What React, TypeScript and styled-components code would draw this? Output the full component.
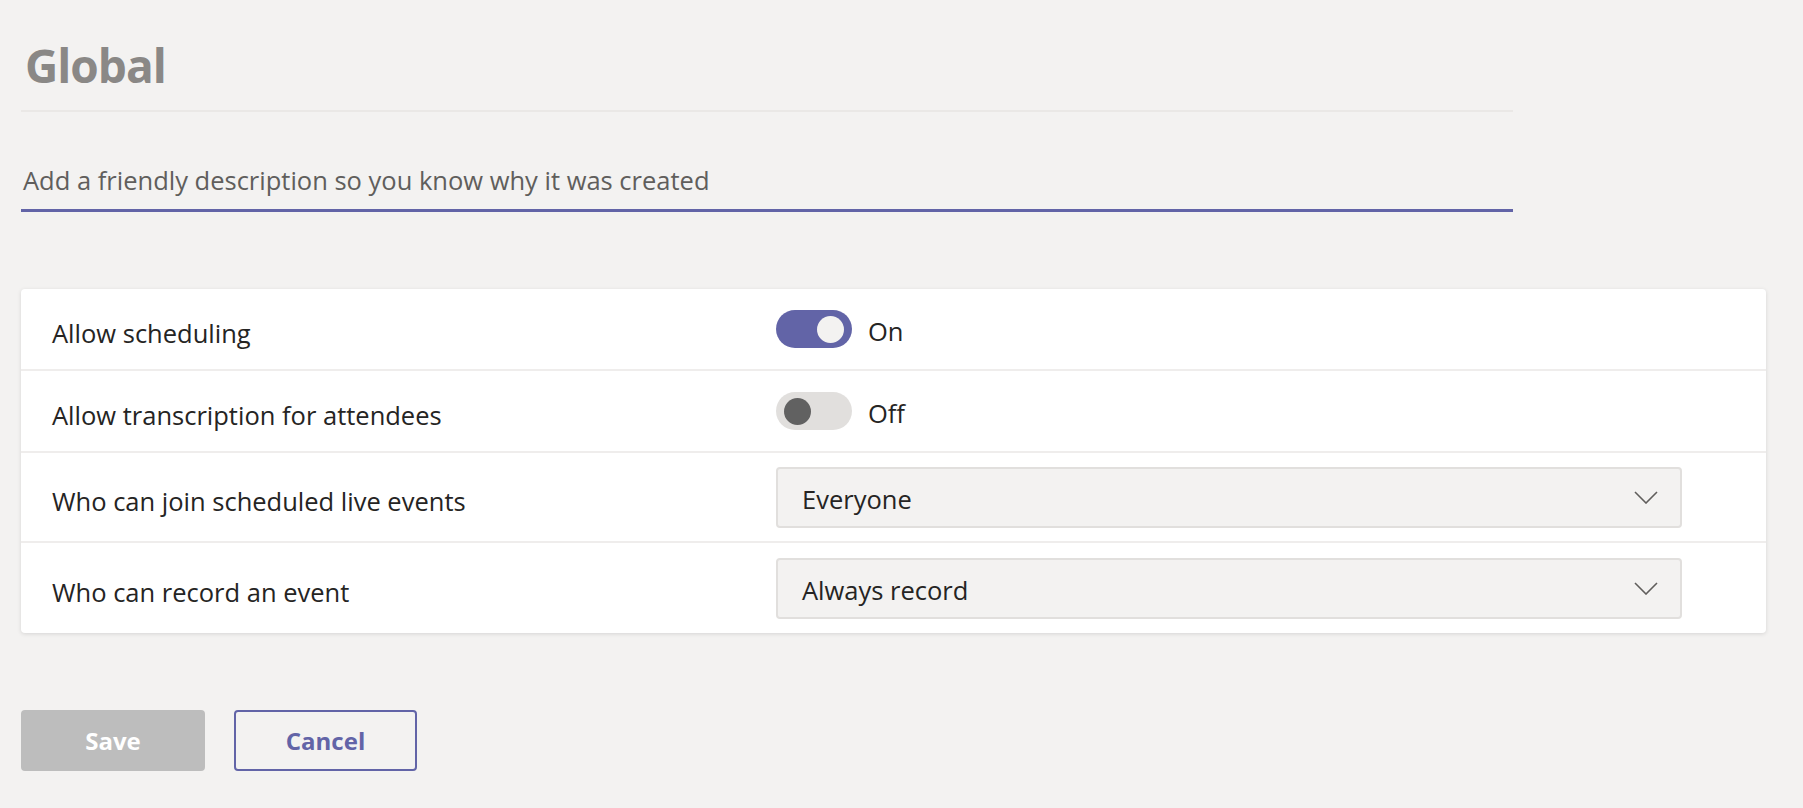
import React, {FC} from 'react';
import styled, {createGlobalStyle} from 'styled-components';

const GlobalStyle = createGlobalStyle`
  body {
    margin: 0;
    background: #f3f2f1;
    font-family: 'Open Sans', 'Noto Sans', sans-serif;
    color: #252423;
  }
`;

type Setting =
  | {label: string; kind: 'toggle'; on: boolean}
  | {label: string; kind: 'select'; value: string};

const settings: Setting[] = [
  {label: 'Allow scheduling', kind: 'toggle', on: true},
  {label: 'Allow transcription for attendees', kind: 'toggle', on: false},
  {label: 'Who can join scheduled live events', kind: 'select', value: 'Everyone'},
  {label: 'Who can record an event', kind: 'select', value: 'Always record'},
];

const Chevron: FC = () => (
  <svg width="24" height="13" viewBox="0 0 24 13" fill="none">
    <path d="M1 1l11 11L23 1" stroke="#605e5c" strokeWidth="1.6" />
  </svg>
);

const App: FC = () => (
  <Page>
    <GlobalStyle />
    <Head>
      <Title>Global</Title>
      <Description>Add a friendly description so you know why it was created</Description>
    </Head>
    <Card>
      {settings.map((s) => (
        <Row key={s.label} $tall={s.kind === 'select'}>
          <Label>{s.label}</Label>
          {s.kind === 'toggle' ? (
            <ToggleWrap>
              <Track $on={s.on}>
                <Knob $on={s.on} />
              </Track>
              <ToggleText>{s.on ? 'On' : 'Off'}</ToggleText>
            </ToggleWrap>
          ) : (
            <Select>
              <SelectValue>{s.value}</SelectValue>
              <Chevron />
            </Select>
          )}
        </Row>
      ))}
    </Card>
    <Actions>
      <Button $variant="disabled">Save</Button>
      <Button $variant="outline">Cancel</Button>
    </Actions>
  </Page>
);

const Page = styled.div`
  padding: 37px 37px 40px 21px;
`;

const Head = styled.div`
  width: 1492px;
`;

const Title = styled.h1`
  margin: 0;
  font-size: 46px;
  line-height: 56px;
  font-weight: 700;
  color: #8a8886;
  padding: 0 0 17px 4px;
  border-bottom: 2px solid #eae8e6;
  letter-spacing: -1px;
`;

const Description = styled.div`
  margin-top: 51px;
  padding: 0 0 12px 2px;
  font-size: 25.5px;
  line-height: 34px;
  color: #605e5c;
  border-bottom: 3px solid #6264a7;
`;

const Card = styled.div`
  margin-top: 77px;
  width: 1745px;
  background: #ffffff;
  border-radius: 4px;
  box-shadow: 0 1px 4px rgba(0, 0, 0, 0.12);
`;

const Row = styled.div<{$tall: boolean}>`
  display: grid;
  grid-template-columns: 755px 906px;
  align-items: center;
  min-height: ${({$tall}) => ($tall ? 90 : 82)}px;
  box-sizing: border-box;
  border-bottom: 2px solid #efedec;
  &:last-child {
    border-bottom: none;
  }
`;

const Label = styled.div`
  padding: 7px 0 0 31px;
  font-size: 25.5px;
  color: #252423;
`;

const ToggleWrap = styled.div`
  display: flex;
  align-items: center;
  gap: 16px;
`;

const Track = styled.div<{$on: boolean}>`
  width: 76px;
  height: 38px;
  border-radius: 19px;
  background: ${({$on}) => ($on ? '#6264a7' : '#e1dfdd')};
  display: flex;
  align-items: center;
  justify-content: ${({$on}) => ($on ? 'flex-end' : 'flex-start')};
  padding: 0 8px;
  box-sizing: border-box;
`;

const Knob = styled.div<{$on: boolean}>`
  width: 27px;
  height: 27px;
  border-radius: 50%;
  background: ${({$on}) => ($on ? '#f3f2f1' : '#616161')};
`;

const ToggleText = styled.span`
  padding-top: 3px;
  font-size: 25.5px;
  color: #252423;
`;

const Select = styled.div`
  height: 61px;
  box-sizing: border-box;
  display: flex;
  align-items: center;
  justify-content: space-between;
  padding: 0 22px 0 24px;
  background: #f3f2f1;
  border: 2px solid #e1dfdd;
  border-radius: 4px;
`;

const SelectValue = styled.span`
  padding-top: 4px;
  font-size: 25.5px;
  color: #252423;
`;

const Actions = styled.div`
  display: flex;
  gap: 29px;
  margin-top: 77px;
`;

const Button = styled.button<{$variant: 'disabled' | 'outline'}>`
  width: ${({$variant}) => ($variant === 'disabled' ? 184 : 183)}px;
  height: 61px;
  border-radius: 4px;
  font-family: inherit;
  font-size: 24px;
  font-weight: 700;
  background: ${({$variant}) => ($variant === 'disabled' ? '#bdbdbd' : 'transparent')};
  color: ${({$variant}) => ($variant === 'disabled' ? '#ffffff' : '#6264a7')};
  border: 2px solid ${({$variant}) => ($variant === 'disabled' ? '#bdbdbd' : '#6264a7')};
`;

export default App;
